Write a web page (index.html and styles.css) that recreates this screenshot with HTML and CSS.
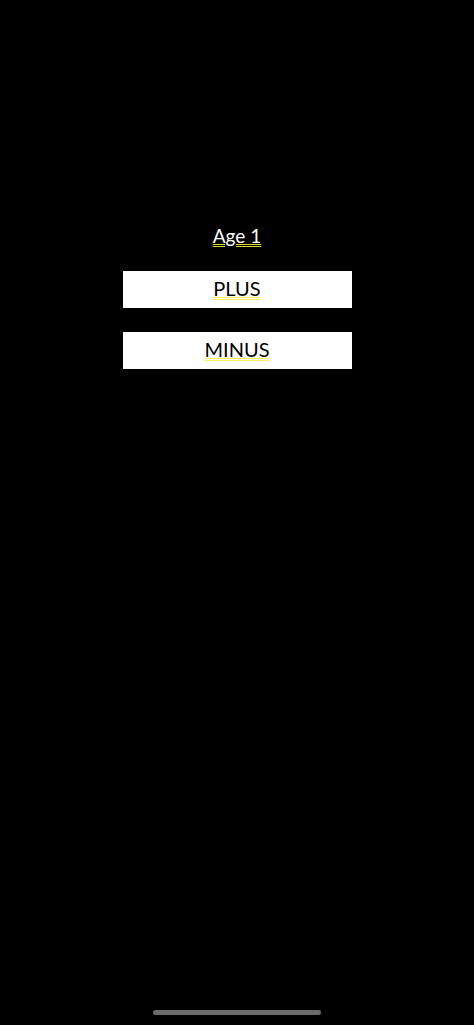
FILE: index.html
```html
<!DOCTYPE html>
<html>
<head>
<meta charset="utf-8">
<link rel="stylesheet" href="styles.css">
</head>
<body>
<div class="screen">
  <div class="content">
    <div class="age">Age 1</div>
    <div class="btn"><span class="label">PLUS</span></div>
    <div class="btn"><span class="label">MINUS</span></div>
  </div>
  <div class="home-bar"></div>
</div>
</body>
</html>
```
FILE: styles.css
```css
html, body {
  margin: 0;
  padding: 0;
  background: #000;
}
.screen {
  width: 474px;
  height: 1025px;
  display: flex;
  flex-direction: column;
  align-items: center;
  font-family: "Lato", "Open Sans", sans-serif;
}
.content {
  margin-top: 224px;
  display: flex;
  flex-direction: column;
  align-items: center;
}
.age {
  color: #fff;
  font-size: 19px;
  line-height: 24px;
  text-decoration-line: underline;
  text-decoration-style: double;
  text-decoration-color: #d8d630;
  text-decoration-thickness: 1px;
  text-underline-offset: 1px;
}
.btn {
  width: 229px;
  height: 37px;
  background: #fff;
  display: flex;
  align-items: center;
  justify-content: center;
  margin-top: 23px;
  box-sizing: border-box;
  padding-bottom: 4px;
}
.btn + .btn {
  margin-top: 24px;
}
.label {
  color: #000;
  font-size: 20px;
  line-height: 24px;
  text-decoration-line: underline;
  text-decoration-style: double;
  text-decoration-color: #ffee58;
  text-decoration-thickness: 1px;
  text-underline-offset: 1px;
}
.home-bar {
  margin-top: auto;
  margin-bottom: 10px;
  width: 168px;
  height: 5px;
  border-radius: 3px;
  background: #6b6b6b;
}
```
